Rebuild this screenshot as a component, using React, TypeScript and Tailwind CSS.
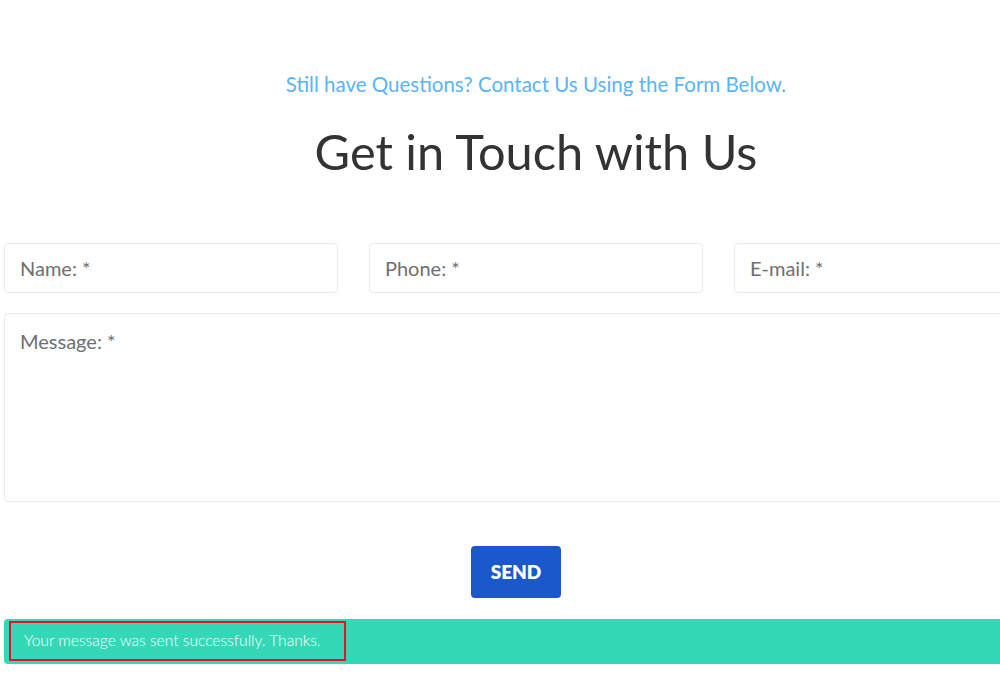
import React from 'react';

const Field = ({ label }: { label: string }) => (
  <div className="flex h-[50px] w-[334px] items-center rounded border border-[#ebebeb] bg-white px-[15px] text-[20px] text-[#6f6f6f]">
    {label}
  </div>
);

const App = () => {
  return (
    <div className="h-[700px] w-[1000px] overflow-hidden bg-white font-['Lato',sans-serif]">
      <div className="ml-[4px] w-[1064px]">
        <p className="pt-[69px] text-center text-[20.5px] text-[#5ab4f8]">
          Still have Questions? Contact Us Using the Form Below.
        </p>
        <h1 className="mt-[21px] text-center text-[48.7px] leading-tight text-[#333]">Get in Touch with Us</h1>
        <div className="mt-[61px] flex gap-[31px]">
          <Field label="Name: *" />
          <Field label="Phone: *" />
          <Field label="E-mail: *" />
        </div>
        <div className="mt-[20px] h-[189px] rounded border border-[#ebebeb] px-[15px] pt-[12px] text-[20px] text-[#6f6f6f]">
          Message: *
        </div>
        <div className="mt-[44px] pl-[467px]">
          <button className="h-[52px] w-[90px] rounded bg-[#1b58cb] pt-[2px] text-[19px] font-extrabold text-white">SEND</button>
        </div>
        <div className="mt-[21px] flex h-[45px] items-center rounded-l bg-[#35d8b6] pl-[5px]">
          <div className="flex h-[40px] w-[337px] items-center border-2 border-[#e8102a] pl-[13px] text-[15.6px] font-light text-white">
            Your message was sent successfully. Thanks.
          </div>
        </div>
      </div>
    </div>
  );
};

export default App;
